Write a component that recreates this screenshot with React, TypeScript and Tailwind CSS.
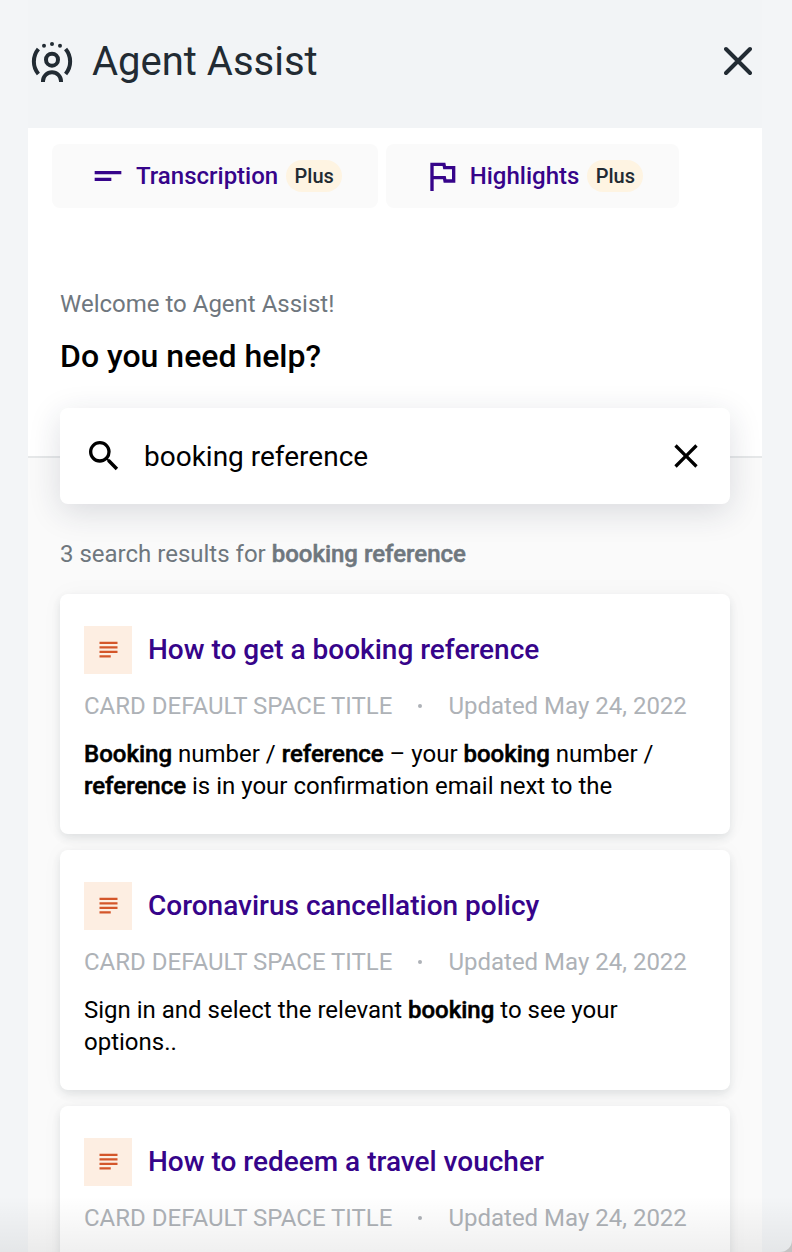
import React from 'react';
import { MdClose, MdSearch, MdShortText, MdSubject } from 'react-icons/md';

interface SearchResult {
  id: number;
  title: string;
  space: string;
  updated: string;
  excerpt: React.ReactNode;
}

const Match: React.FC<{ children: React.ReactNode }> = ({ children }) => (
  <b className="font-medium [-webkit-text-stroke:0.5px_currentColor]">{children}</b>
);

const RESULTS: SearchResult[] = [
  {
    id: 1,
    title: 'How to get a booking reference',
    space: 'CARD DEFAULT SPACE TITLE',
    updated: 'Updated May 24, 2022',
    excerpt: (
      <>
        <Match>Booking</Match> number / <Match>reference</Match> – your <Match>booking</Match> number /{' '}
        <Match>reference</Match> is in your confirmation email next to the
      </>
    ),
  },
  {
    id: 2,
    title: 'Coronavirus cancellation policy',
    space: 'CARD DEFAULT SPACE TITLE',
    updated: 'Updated May 24, 2022',
    excerpt: (
      <>
        Sign in and select the relevant <Match>booking</Match> to see your
        <span className="block">options..</span>
      </>
    ),
  },
  {
    id: 3,
    title: 'How to redeem a travel voucher',
    space: 'CARD DEFAULT SPACE TITLE',
    updated: 'Updated May 24, 2022',
    excerpt: null,
  },
];

const AgentIcon = () => (
  <svg width="48" height="48" viewBox="0 0 48 48" fill="none" stroke="#222b33" strokeWidth="4">
    <circle cx="24" cy="21.7" r="6" />
    <path d="M15 44v-1a9 8.700 0 0 1 18 0V44" />
    <path d="M10.400 11A19.500 19.500 0 0 0 10.400 36" />
    <path d="M37.600 11A19.500 19.500 0 0 1 37.600 36" />
    <g fill="#222b33" stroke="none">
      <circle cx="16" cy="7.700" r="2" />
      <circle cx="24" cy="5.900" r="2" />
      <circle cx="32" cy="7.700" r="2" />
    </g>
  </svg>
);

const FlagIcon = () => (
  <svg width="40" height="40" viewBox="0 0 24 24" fill="currentColor">
    <path d="m12.360 6 .4 2H18v6h-3.360l-.4-2H7V6h5.360M14 4H5v17h2v-7h5.600l.4 2h7V6h-5.600L14 4z" />
  </svg>
);

const TabButton: React.FC<{ icon: React.ReactNode; label: string }> = ({ icon, label }) => (
  <button className="flex h-16 items-center rounded-lg bg-[#fafafa] px-9 text-2xl font-medium text-[#36048a]">
    {icon}
    <span className="ml-2">{label}</span>
    <span className="ml-2 flex h-8 w-14 items-center justify-center rounded-full bg-[#fef4e2] text-xl text-[#222b33]">
      Plus
    </span>
  </button>
);

const ResultCard: React.FC<{ result: SearchResult }> = ({ result }) => (
  <article className="h-60 shrink-0 rounded-lg bg-white px-6 pt-8 shadow-[0_4px_8px_rgba(34,51,68,0.11),0_0_24px_rgba(34,43,60,0.03)]">
    <div className="flex items-center gap-4">
      <div className="flex size-12 items-center justify-center bg-[#fdeee2] pb-px text-[#d4562a]">
        <MdSubject size={27} />
      </div>
      <h2 className="text-[28px] leading-8 font-medium text-[#36048a]">{result.title}</h2>
    </div>
    <div className="mt-4 flex h-8 items-center text-2xl text-[#aeb2b7]">
      <span>{result.space}</span>
      <span className="mx-[26px] size-1 rounded-full bg-[#aeb2b7]" />
      <span>{result.updated}</span>
    </div>
    <p className="mt-4 text-2xl leading-8 text-black">{result.excerpt}</p>
  </article>
);

export default function App() {
  return (
    <div className="bg-[#c4c4c4]">
      <div className="relative h-[1252px] w-[792px] overflow-hidden rounded-br-[12px] bg-[#f3f5f7] px-7 font-[Roboto,sans-serif]">
        <div className="flex h-full w-[734px] flex-col bg-[#fafafa]">
          <header className="flex h-32 shrink-0 items-start bg-[#f2f4f6] pt-[38px] pr-2.5 text-[#222b33]">
            <AgentIcon />
            <h1 className="ml-4 flex-1 text-[40px] leading-[48px]">Agent Assist</h1>
            <button aria-label="Close panel">
              <svg width="28" height="48" viewBox="0 0 28 48" stroke="currentColor" strokeWidth="4" strokeLinecap="round">
                <path d="M2 11 26 35M26 11 2 35" />
              </svg>
            </button>
          </header>

          {/* Intro */}
          <section className="h-[330px] shrink-0 border-b-2 border-[#e6e8e9] bg-white pt-4">
            <nav className="flex gap-[7.5px] px-6">
              <TabButton icon={<MdShortText size={40} />} label="Transcription" />
              <TabButton icon={<FlagIcon />} label="Highlights" />
            </nav>
            <p className="mt-20 px-8 text-2xl leading-8 text-[#6f777e]">Welcome to Agent Assist!</p>
            <p className="mt-4 px-8 text-[32px] leading-10 font-medium text-black">Do you need help?</p>
          </section>

          {/* Search box sits across the divider */}
          <div className="z-10 mx-8 -mt-[50px] flex h-24 shrink-0 items-center rounded-lg bg-white px-6 shadow-[0_8px_32px_rgba(34,43,68,0.15)]">
            <MdSearch size={40} />
            <span className="ml-5 flex-1 pt-0.5 text-[28px]">booking reference</span>
            <MdClose size={40} />
          </div>

          <p className="z-10 mt-[34px] px-8 text-2xl leading-8 text-[#6f777e]">
            3 search results for <Match>booking reference</Match>
          </p>

          <div className="mx-8 mt-6 flex flex-col gap-4">
            {RESULTS.map((result) => (
              <ResultCard key={result.id} result={result} />
            ))}
          </div>
        </div>

        {/* Fade along the bottom edge */}
        <div className="absolute inset-x-0 bottom-0 h-14 bg-linear-to-b from-transparent to-black/6" />
      </div>
    </div>
  );
}
